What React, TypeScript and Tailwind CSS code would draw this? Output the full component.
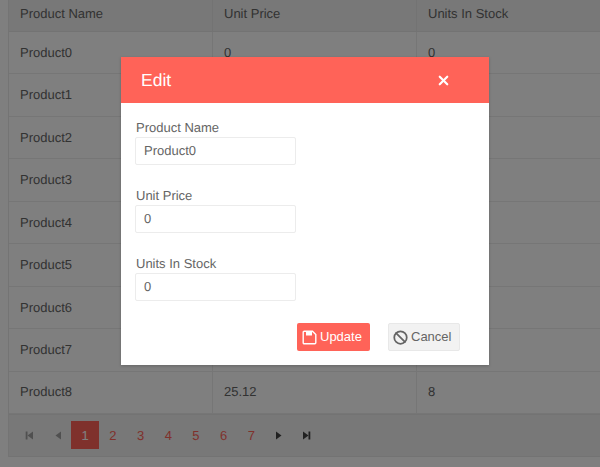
import { Ban, X } from "lucide-react";

const rows = [
  ["Product0", "0", "0"],
  ["Product1", "", ""],
  ["Product2", "", ""],
  ["Product3", "", ""],
  ["Product4", "", ""],
  ["Product5", "", ""],
  ["Product6", "", ""],
  ["Product7", "", ""],
  ["Product8", "25.12", "8"],
];

const fields = [
  { label: "Product Name", value: "Product0" },
  { label: "Unit Price", value: "0" },
  { label: "Units In Stock", value: "0" },
];

function Triangle({ flip, bar, color }: { flip?: boolean; bar?: boolean; color: string }) {
  return (
    <svg width="9" height="9" viewBox="0 0 9 9" className={flip ? "rotate-180" : ""} fill={color}>
      <path d="M1 0.5 L6.5 4.5 L1 8.5 Z" />
      {bar && <rect x="6.5" y="0.5" width="1.8" height="8" />}
    </svg>
  );
}

function Floppy() {
  return (
    <svg width="15" height="15" viewBox="0 0 15 15" fill="none" stroke="currentColor" strokeWidth="1.4">
      <path d="M1.2 2.2 a1 1 0 0 1 1-1 H10.5 L13.8 4.5 V12.8 a1 1 0 0 1 -1 1 H2.2 a1 1 0 0 1 -1-1 Z" />
      <path d="M4 1.5 H10 V5.5 H4 Z" fill="currentColor" stroke="none" />
    </svg>
  );
}

export default function App() {
  return (
    <div className="relative h-[467px] w-[600px] overflow-hidden bg-white font-['Liberation_Sans',Arial,sans-serif] text-[13px] text-[#656565] [text-rendering:geometricPrecision]">
      {/* Grid */}
      <div className="ml-2 w-[600px] border-l border-[#e8e8e8]">
        <div className="grid h-[32px] grid-cols-[203px_204px_1fr] border-b border-[#e6e6e6] bg-[#f0f0f0]">
          <div className="flex items-center pb-[4px] pl-[11px]">Product Name</div>
          <div className="flex items-center border-l border-[#e6e6e6] pb-[4px] pl-[11px]">Unit Price</div>
          <div className="flex items-center border-l border-[#e6e6e6] pb-[4px] pl-[11px]">Units In Stock</div>
        </div>
        {rows.map((row) => (
          <div key={row[0]} className="grid h-[42.44px] grid-cols-[203px_204px_1fr] items-center border-b border-[#ececec]">
            <div className="pl-[11px]">{row[0]}</div>
            <div className="flex h-full items-center border-l border-[#ececec] pl-[11px]">{row[1]}</div>
            <div className="flex h-full items-center border-l border-[#ececec] pl-[11px]">{row[2]}</div>
          </div>
        ))}
        {/* Pager */}
        <div className="flex h-[43px] items-center border-y border-[#e6e6e6] bg-[#f0f0f0] pl-[7px]">
          <div className="flex w-[27.7px] justify-center">
            <Triangle flip bar color="#a0a0a0" />
          </div>
          <div className="flex w-[27.7px] justify-center">
            <Triangle flip color="#a0a0a0" />
          </div>
          {[1, 2, 3, 4, 5, 6, 7].map((n) => (
            <div
              key={n}
              className={
                n === 1
                  ? "flex h-[28px] w-[27.7px] items-center justify-center bg-[#ff6358] text-white"
                  : "flex h-[28px] w-[27.7px] items-center justify-center text-[#ff6358]"
              }
            >
              {n}
            </div>
          ))}
          <div className="flex w-[27.7px] justify-center">
            <Triangle color="#424242" />
          </div>
          <div className="flex w-[27.7px] justify-center">
            <Triangle bar color="#424242" />
          </div>
        </div>
      </div>

      {/* Overlay */}
      <div className="absolute inset-0 bg-black/50" />

      {/* Edit dialog */}
      <div className="absolute left-[121px] top-[57px] flex h-[308px] w-[368px] flex-col bg-white shadow-[0_1px_3px_rgba(0,0,0,0.2)]">
        <div className="flex h-[46px] items-center justify-between bg-[#ff6358] pl-[20px] pr-[38px] text-white">
          <span className="text-[17.5px]">Edit</span>
          <X size={15} strokeWidth={3.5} />
        </div>
        <div className="flex flex-col gap-[23px] px-[14px] pt-[17px]">
          {fields.map((f) => (
            <div key={f.label} className="flex flex-col">
              <label className="h-[17px] pl-[1px] leading-[15px]">{f.label}</label>
              <div className="flex h-[28px] w-[161px] items-center rounded-[2px] border border-[#ececec] px-[8px]">
                {f.value}
              </div>
            </div>
          ))}
        </div>
        <div className="mt-[22px] flex justify-end gap-[18px] pr-[29px]">
          <button className="flex h-[28px] w-[73px] items-center gap-[3px] rounded-[2px] bg-[#ff6358] pl-[5px] text-white">
            <Floppy />
            Update
          </button>
          <button className="flex h-[28px] w-[72px] items-center gap-[3px] rounded-[2px] border border-[#e8e8e8] bg-[#f2f2f2] pl-[4px]">
            <Ban size={15} strokeWidth={2.8} />
            Cancel
          </button>
        </div>
      </div>
    </div>
  );
}
